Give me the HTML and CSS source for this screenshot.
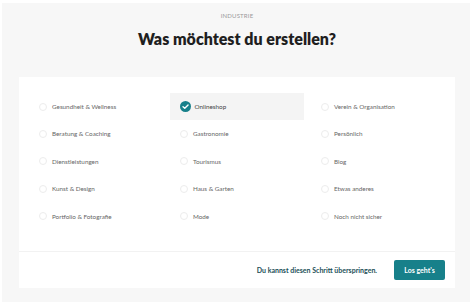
FILE: index.html
```html
<!DOCTYPE html>
<html lang="de">
<head>
    <meta charset="UTF-8">
    <meta name="viewport" content="width=device-width, initial-scale=1.0">
    <title>Was möchtest du erstellen?</title>
    <link rel="stylesheet" href="styles.css">
</head>
<body>
<div class="page">
    <div class="step">INDUSTRIE</div>
    <h1>Was möchtest du erstellen?</h1>

    <div class="card">
        <div class="options">
            <div class="option"><span class="radio"></span>Gesundheit &amp; Wellness</div>
            <div class="option selected">
                <svg class="check" viewBox="0 0 12 12" width="11" height="11">
                    <circle cx="6" cy="6" r="6" fill="#17808a"/>
                    <path d="M3.3 6.2 L5.2 8 L8.8 4.3" fill="none" stroke="#fff" stroke-width="1.5" stroke-linecap="round" stroke-linejoin="round"/>
                </svg>Onlineshop
            </div>
            <div class="option"><span class="radio"></span>Verein &amp; Organisation</div>

            <div class="option"><span class="radio"></span>Beratung &amp; Coaching</div>
            <div class="option"><span class="radio"></span>Gastronomie</div>
            <div class="option"><span class="radio"></span>Persönlich</div>

            <div class="option"><span class="radio"></span>Dienstleistungen</div>
            <div class="option"><span class="radio"></span>Tourismus</div>
            <div class="option"><span class="radio"></span>Blog</div>

            <div class="option"><span class="radio"></span>Kunst &amp; Design</div>
            <div class="option"><span class="radio"></span>Haus &amp; Garten</div>
            <div class="option"><span class="radio"></span>Etwas anderes</div>

            <div class="option"><span class="radio"></span>Portfolio &amp; Fotografie</div>
            <div class="option"><span class="radio"></span>Mode</div>
            <div class="option"><span class="radio"></span>Noch nicht sicher</div>
        </div>

        <div class="footer">
            <a href="#" class="skip">Du kannst diesen Schritt überspringen.</a>
            <button class="go">Los geht's</button>
        </div>
    </div>
</div>
</body>
</html>
```

FILE: styles.css
```css
body {
    margin: 0;
    background: #fff;
    font-family: Lato, "Open Sans", sans-serif;
    color: #222;
}
.page {
    margin: 3px 4px 3px 2px;
    height: 299px;
    background-color: #f7f7f7;
    padding: 0 15px 0 17px;
    box-sizing: border-box;
    overflow: hidden;
}
.step {
    padding-top: 9px;
    text-align: center;
    font-size: 6px;
    letter-spacing: 0.2px;
    color: #9a9a9a;
    line-height: 8px;
}
h1 {
    margin: 8px 0 0;
    text-align: center;
    font-size: 16px;
    font-weight: 800;
    line-height: 22px;
    color: #1f1f1f;
}
.card {
    margin-top: 27px;
    background: white;
    height: 211px;
}
.options {
    display: grid;
    grid-template-columns: repeat(3, 134px);
    grid-auto-rows: 27px;
    align-content: start;
    column-gap: 7px;
    row-gap: 0.4px;
    padding: 16px 10px 0;
    height: 175px;
    box-sizing: border-box;
    border-bottom: 1px solid #f2f2f2;
}
.option {
    display: flex;
    align-items: center;
    padding-left: 10px;
    font-size: 6.3px;
    color: #666;
}
.option.selected {
    background-color: #f4f4f4;
    color: #444;
}
.radio {
    width: 8px;
    height: 8px;
    border: 1px solid #ececec;
    border-radius: 50%;
    margin-right: 5px;
    box-sizing: border-box;
}
.check {
    margin-right: 4px;
    margin-left: -0.5px;
}
.footer {
    display: flex;
    align-items: center;
    justify-content: flex-end;
    height: 35px;
    padding-right: 10px;
}
.skip {
    font-size: 7px;
    font-weight: bold;
    color: #234f57;
    text-decoration: none;
    margin-right: 17px;
}
.go {
    width: 51px;
    height: 20px;
    border: none;
    border-radius: 2px;
    background-color: #17808a;
    color: white;
    font-family: Lato, sans-serif;
    font-size: 7px;
    font-weight: bold;
    padding: 0;
}
```
